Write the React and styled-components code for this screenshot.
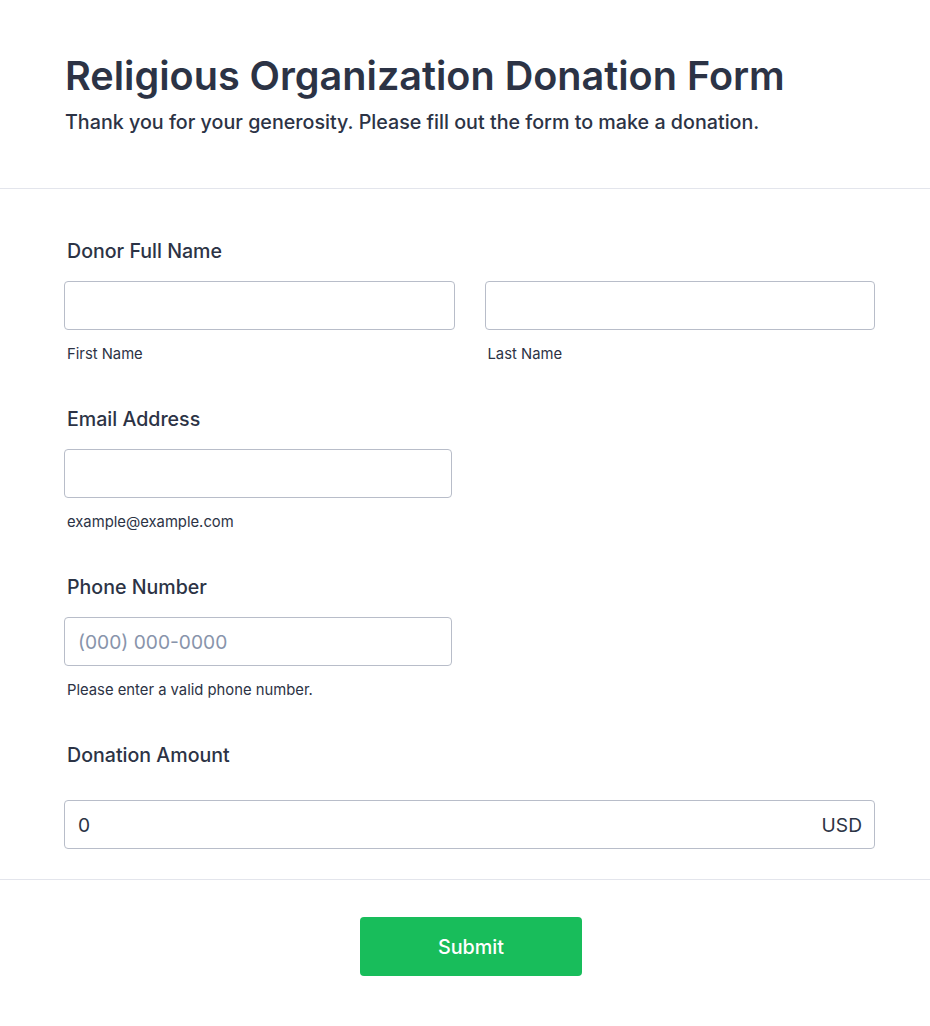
import React from "react";
import styled, { createGlobalStyle } from "styled-components";

const GlobalStyle = createGlobalStyle`
    html, body {
        margin: 0;
        padding: 0;
        background: #ffffff;
    }
    body {
        font-family: Inter, "Noto Sans", sans-serif;
        color: #2c3345;
    }
    * {
        box-sizing: border-box;
    }
`;

const Page = styled.div`
    width: 930px;
    background: #ffffff;
`;

const Header = styled.header`
    padding: 52px 64px 52px 65px;
    border-bottom: 1px solid #e3e5ec;
`;

const Title = styled.h1`
    margin: 0;
    font-size: 39.6px;
    line-height: 48px;
    font-weight: 600;
    color: #2c3345;
`;

const Subtitle = styled.p`
    margin: 8px 0 0;
    font-size: 19.7px;
    line-height: 28px;
    font-weight: 500;
    color: #2c3345;
`;

const FormBody = styled.div`
    padding: 50px 55px 30px 64px;
    border-bottom: 1px solid #e3e5ec;
    display: flex;
    flex-direction: column;
    gap: 44px;
`;

const Field = styled.div`
    display: flex;
    flex-direction: column;
    width: ${(p) => p.$width || "100%"};
`;

const Label = styled.label`
    padding-left: 3px;
    font-size: 19.6px;
    line-height: 24px;
    font-weight: 500;
    color: #2c3345;
    margin-bottom: ${(p) => (p.$wide ? "33px" : "18px")};
`;

const Row = styled.div`
    display: flex;
    gap: 30px;
`;

const Column = styled.div`
    flex: 1;
    display: flex;
    flex-direction: column;
`;

const InputBox = styled.div`
    height: 49px;
    border: 1px solid #b8bdc9;
    border-radius: 4px;
    background: #ffffff;
    display: flex;
    align-items: center;
    justify-content: space-between;
    padding: 0 12px 0 13px;
    font-size: 19.2px;
    color: #2c3345;
`;

const Placeholder = styled.span`
    color: #8894ab;
`;

const SubLabel = styled.span`
    margin-top: 15px;
    padding-left: 3px;
    font-size: 14.8px;
    line-height: 18px;
    color: #2c3345;
`;

const Footer = styled.div`
    display: flex;
    justify-content: center;
    padding: 37px 0 50px;
`;

const SubmitButton = styled.button`
    width: 222px;
    height: 59px;
    border: none;
    border-radius: 4px;
    background: #18bd5b;
    color: #ffffff;
    font-family: Inter, "Noto Sans", sans-serif;
    font-size: 19.8px;
    font-weight: 500;
    margin-left: 12px;
`;

const App = () => (
    <Page>
        <GlobalStyle />
        <Header>
            <Title>Religious Organization Donation Form</Title>
            <Subtitle>Thank you for your generosity. Please fill out the form to make a donation.</Subtitle>
        </Header>
        <FormBody>
            <Field>
                <Label>Donor Full Name</Label>
                <Row>
                    <Column>
                        <InputBox />
                        <SubLabel>First Name</SubLabel>
                    </Column>
                    <Column>
                        <InputBox />
                        <SubLabel>Last Name</SubLabel>
                    </Column>
                </Row>
            </Field>
            <Field $width="388px">
                <Label>Email Address</Label>
                <InputBox />
                <SubLabel>example@example.com</SubLabel>
            </Field>
            <Field $width="388px">
                <Label>Phone Number</Label>
                <InputBox>
                    <Placeholder>(000) 000-0000</Placeholder>
                </InputBox>
                <SubLabel>Please enter a valid phone number.</SubLabel>
            </Field>
            <Field>
                <Label $wide>Donation Amount</Label>
                <InputBox>
                    <span>0</span>
                    <span>USD</span>
                </InputBox>
            </Field>
        </FormBody>
        <Footer>
            <SubmitButton>Submit</SubmitButton>
        </Footer>
    </Page>
);

export default App;
